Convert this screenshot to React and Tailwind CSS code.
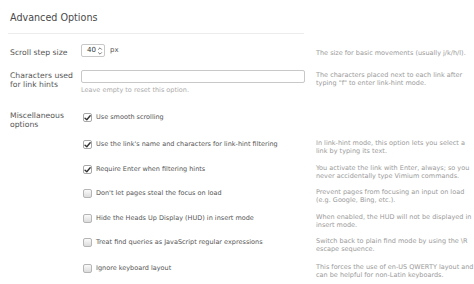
function Check({ checked }) {
  if (checked) {
    return (
      <span className="flex h-[9px] w-[9px] shrink-0 items-center justify-center rounded-[2px] border border-[#a8a8a8] bg-white">
        <svg viewBox="0 0 10 10" className="h-[8px] w-[8px]">
          <path d="M1.5 5.2 L4 7.6 L8.8 1.8" fill="none" stroke="#333" strokeWidth="2" strokeLinecap="round" strokeLinejoin="round" />
        </svg>
      </span>
    );
  }
  return (
    <span className="block h-[9px] w-[9px] shrink-0 rounded-[2px] border border-[#b5b5b5] bg-gradient-to-b from-[#fafafa] to-[#dcdcdc]" />
  );
}

const options = [
  { label: "Use smooth scrolling", checked: true, help: null, h: "h-[27px]" },
  {
    label: "Use the link's name and characters for link-hint filtering",
    checked: true,
    help: ["In link-hint mode, this option lets you select a", "link by typing its text."],
    h: "h-[25px]",
  },
  {
    label: "Require Enter when filtering hints",
    checked: true,
    help: ["You activate the link with Enter, always; so you", "never accidentally type Vimium commands."],
    h: "h-[24px]",
  },
  {
    label: "Don't let pages steal the focus on load",
    checked: false,
    help: ["Prevent pages from focusing an input on load", "(e.g. Google, Bing, etc.)."],
    h: "h-[25px]",
  },
  {
    label: "Hide the Heads Up Display (HUD) in insert mode",
    checked: false,
    help: ["When enabled, the HUD will not be displayed in", "insert mode."],
    h: "h-[24px]",
  },
  {
    label: "Treat find queries as JavaScript regular expressions",
    checked: false,
    help: ["Switch back to plain find mode by using the \\R", "escape sequence."],
    h: "h-[26px]",
  },
  {
    label: "Ignore keyboard layout",
    checked: false,
    help: ["This forces the use of en-US QWERTY layout and", "can be helpful for non-Latin keyboards."],
    h: "h-[25px]",
  },
];

export default function App() {
  return (
    <div className="h-[284px] w-[474px] overflow-hidden bg-white font-['DejaVu_Sans',sans-serif] text-[#555]">
      <div className="pl-[10px] pt-[12px] text-[9.6px] leading-[12px] text-[#4a4a4a]">Advanced Options</div>
      <div className="ml-[8px] mt-[9px] w-[296px] border-t border-[#ececec]" />

      <div className="grid grid-cols-[71px_235px_1fr] pl-[10px]">
        {/* scroll step */}
        <div className="mt-[14px] text-[7.7px] leading-[9px]">Scroll step size</div>
        <div className="mt-[10px] flex items-center gap-[5px]">
          <div className="flex h-[13px] w-[24px] items-center justify-end rounded-[2px] border border-[#c8c8c8] bg-white pr-[1px]">
            <span className="text-[7px] leading-none text-[#333]">40</span>
            <svg viewBox="0 0 6 10" className="ml-[1px] h-[10px] w-[6px]">
              <path d="M1.2 3.6 L3 1.8 L4.8 3.6" fill="none" stroke="#555" strokeWidth="0.8" />
              <path d="M1.2 6.4 L3 8.2 L4.8 6.4" fill="none" stroke="#555" strokeWidth="0.8" />
            </svg>
          </div>
          <span className="text-[7px] leading-none">px</span>
        </div>
        <div className="mt-[15px] text-[6.5px] leading-[8px] text-[#9a9a9a]">
          The size for basic movements (usually j/k/h/l).
        </div>

        {/* link hints */}
        <div className="mt-[14px] text-[7.7px] leading-[9px]">
          Characters used
          <br />
          for link hints
        </div>
        <div className="mt-[13px]">
          <div className="h-[13px] w-[224px] rounded-[2px] border border-[#c8c8c8] bg-white" />
          <div className="mt-[3px] text-[6.5px] leading-[8px] text-[#aaa]">Leave empty to reset this option.</div>
        </div>
        <div className="mt-[14px] text-[6.5px] leading-[8px] text-[#9a9a9a]">
          The characters placed next to each link after
          <br />
          typing "f" to enter link-hint mode.
        </div>

        {/* misc */}
        <div className="mt-[17px] text-[7.7px] leading-[9px]">
          Miscellaneous
          <br />
          options
        </div>
        <div className="col-span-2 mt-[17px]">
          {options.map((o) => (
            <div key={o.label} className={`flex ${o.h}`}>
              <div className="flex w-[235px] items-start gap-[4px] pl-[2px] pt-[2px]">
                <Check checked={o.checked} />
                <span className="text-[6.5px] leading-[9px] text-[#555]">{o.label}</span>
              </div>
              {o.help && (
                <div className="whitespace-nowrap pt-[1px] text-[6.5px] leading-[8px] text-[#9a9a9a]">
                  {o.help[0]}
                  <br />
                  {o.help[1]}
                </div>
              )}
            </div>
          ))}
        </div>
      </div>
    </div>
  );
}
